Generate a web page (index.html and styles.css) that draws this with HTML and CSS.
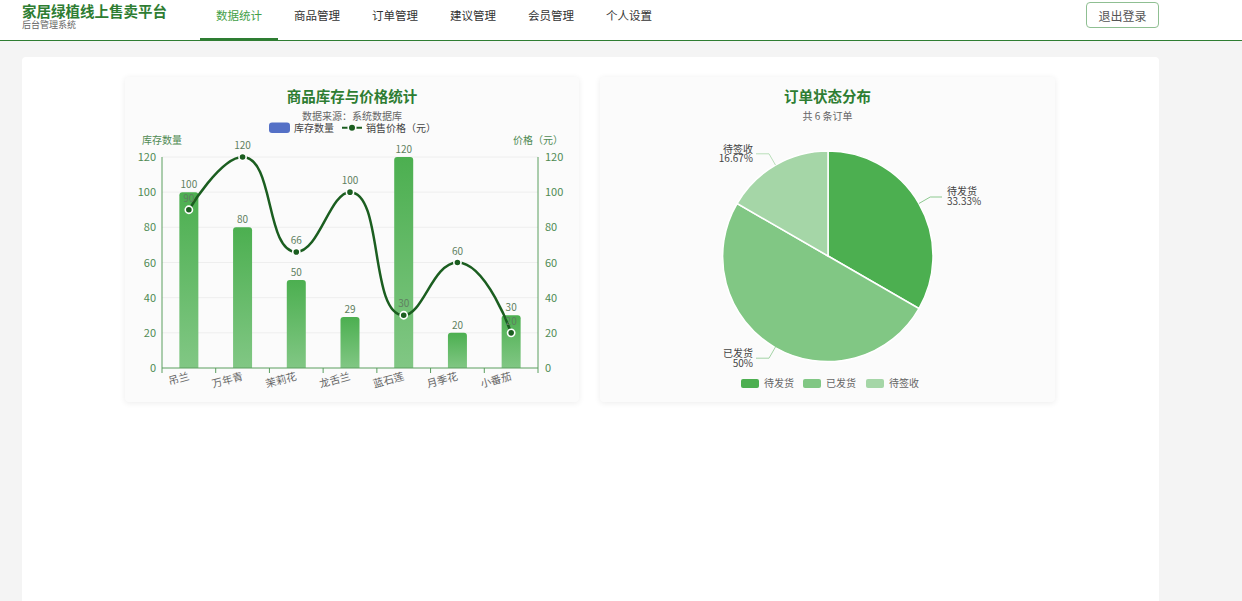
FILE: index.html
```html
<!DOCTYPE html>
<html lang="zh-CN">
<head>
<meta charset="utf-8">
<title>家居绿植线上售卖平台 - 数据统计</title>
<link rel="stylesheet" href="styles.css">
</head>
<body>
<header class="topbar">
  <div class="brand">
    <div class="brand-title">家居绿植线上售卖平台</div>
    <div class="brand-sub">后台管理系统</div>
  </div>
  <nav class="nav">
    <a class="nav-item active">数据统计</a>
    <a class="nav-item">商品管理</a>
    <a class="nav-item">订单管理</a>
    <a class="nav-item">建议管理</a>
    <a class="nav-item">会员管理</a>
    <a class="nav-item">个人设置</a>
  </nav>
  <button class="logout">退出登录</button>
</header>

<main class="main">
  <section class="card card-left">
    <div class="card-title">商品库存与价格统计</div>
    <div class="card-sub">数据来源：系统数据库</div>
    <svg class="chart" width="454" height="281" viewBox="0 0 454 281">
      <defs>
        <linearGradient id="barGrad" x1="0" y1="0" x2="0" y2="1">
          <stop offset="0" stop-color="#4caf50"/>
          <stop offset="1" stop-color="#81c784"/>
        </linearGradient>
      </defs>
      <!-- legend -->
      <rect x="144" y="1.5" width="21" height="10.5" rx="3" fill="#5470c6"/>
      <text class="legend-text" x="169" y="10.5">库存数量</text>
      <line x1="217" y1="6.75" x2="237" y2="6.75" stroke="#1b5e20" stroke-width="2"/>
      <circle cx="227" cy="6.75" r="3.8" fill="#1b5e20" stroke="#fbfbfb" stroke-width="1.6"/>
      <text class="legend-text" x="241" y="10.5">销售价格（元）</text>

      <!-- axis names -->
      <text class="axis-name" x="17" y="22.5">库存数量</text>
      <text class="axis-name" x="388" y="22.5">价格（元）</text>

      <!-- grid lines -->
      <g class="grid">
        <line x1="37" y1="36" x2="413" y2="36"/>
        <line x1="37" y1="71.17" x2="413" y2="71.17"/>
        <line x1="37" y1="106.33" x2="413" y2="106.33"/>
        <line x1="37" y1="141.5" x2="413" y2="141.5"/>
        <line x1="37" y1="176.67" x2="413" y2="176.67"/>
        <line x1="37" y1="211.83" x2="413" y2="211.83"/>
      </g>

      <!-- left axis labels -->
      <g class="ylabel-left">
        <text x="31" y="40">120</text>
        <text x="31" y="75.2">100</text>
        <text x="31" y="110.3">80</text>
        <text x="31" y="145.5">60</text>
        <text x="31" y="180.7">40</text>
        <text x="31" y="215.8">20</text>
        <text x="31" y="251">0</text>
      </g>
      <!-- right axis labels -->
      <g class="ylabel-right">
        <text x="420" y="40">120</text>
        <text x="420" y="75.2">100</text>
        <text x="420" y="110.3">80</text>
        <text x="420" y="145.5">60</text>
        <text x="420" y="180.7">40</text>
        <text x="420" y="215.8">20</text>
        <text x="420" y="251">0</text>
      </g>

      <!-- bars -->
      <g fill="url(#barGrad)">
        <path d="M54.36,247 V74.17 Q54.36,71.17 57.36,71.17 H70.36 Q73.36,71.17 73.36,74.17 V247 Z"/>
        <path d="M108.07,247 V109.33 Q108.07,106.33 111.07,106.33 H124.07 Q127.07,106.33 127.07,109.33 V247 Z"/>
        <path d="M161.79,247 V162.08 Q161.79,159.08 164.79,159.08 H177.79 Q180.79,159.08 180.79,162.08 V247 Z"/>
        <path d="M215.5,247 V199.01 Q215.5,196.01 218.5,196.01 H231.5 Q234.5,196.01 234.5,199.01 V247 Z"/>
        <path d="M269.21,247 V39 Q269.21,36 272.21,36 H285.21 Q288.21,36 288.21,39 V247 Z"/>
        <path d="M322.93,247 V214.83 Q322.93,211.83 325.93,211.83 H338.93 Q341.93,211.83 341.93,214.83 V247 Z"/>
        <path d="M376.64,247 V197.25 Q376.64,194.25 379.64,194.25 H392.64 Q395.64,194.25 395.64,197.25 V247 Z"/>
      </g>

      <!-- bar labels -->
      <g class="val-label">
        <text x="63.86" y="67">100</text>
        <text x="117.57" y="102">80</text>
        <text x="171.29" y="155">50</text>
        <text x="225" y="192">29</text>
        <text x="278.71" y="32">120</text>
        <text x="332.43" y="207.5">20</text>
        <text x="386.14" y="190">30</text>
      </g>

      <!-- axes -->
      <g class="axis">
        <line x1="37" y1="36" x2="37" y2="247"/>
        <line x1="413" y1="36" x2="413" y2="247"/>
        <line x1="37" y1="247" x2="413" y2="247"/>
        <line x1="37" y1="247" x2="37" y2="252"/>
        <line x1="90.71" y1="247" x2="90.71" y2="252"/>
        <line x1="144.43" y1="247" x2="144.43" y2="252"/>
        <line x1="198.14" y1="247" x2="198.14" y2="252"/>
        <line x1="251.86" y1="247" x2="251.86" y2="252"/>
        <line x1="305.57" y1="247" x2="305.57" y2="252"/>
        <line x1="359.29" y1="247" x2="359.29" y2="252"/>
        <line x1="413" y1="247" x2="413" y2="252"/>
      </g>

      <!-- price line -->
      <path class="price-line" d="M63.86,88.75 C63.86,88.75 95.64,36 117.57,36 C149.35,36 140.36,130.95 171.29,130.95 C194.07,130.95 204.89,71.17 225,71.17 C258.6,71.17 244.29,194.25 278.71,194.25 C298,194.25 307.74,141.5 332.43,141.5 C361.45,141.5 386.14,211.83 386.14,211.83"/>
      <g class="price-dot">
        <circle cx="63.86" cy="88.75" r="3.6"/>
        <circle cx="117.57" cy="36" r="3.6"/>
        <circle cx="171.29" cy="130.95" r="3.6"/>
        <circle cx="225" cy="71.17" r="3.6"/>
        <circle cx="278.71" cy="194.25" r="3.6"/>
        <circle cx="332.43" cy="141.5" r="3.6"/>
        <circle cx="386.14" cy="211.83" r="3.6"/>
      </g>
      <g class="val-label">
        <text x="63.86" y="81">90</text>
        <text x="117.57" y="28">120</text>
        <text x="171.29" y="123">66</text>
        <text x="225" y="63">100</text>
        <text x="278.71" y="186">30</text>
        <text x="332.43" y="133.5">60</text>
        <text x="386.14" y="204">20</text>
      </g>

      <!-- x labels -->
      <g class="xlabel">
        <text transform="translate(63.86,255) rotate(-15)" dy="0.35em">吊兰</text>
        <text transform="translate(117.57,255) rotate(-15)" dy="0.35em">万年青</text>
        <text transform="translate(171.29,255) rotate(-15)" dy="0.35em">茉莉花</text>
        <text transform="translate(225,255) rotate(-15)" dy="0.35em">龙舌兰</text>
        <text transform="translate(278.71,255) rotate(-15)" dy="0.35em">蓝石莲</text>
        <text transform="translate(332.43,255) rotate(-15)" dy="0.35em">月季花</text>
        <text transform="translate(386.14,255) rotate(-15)" dy="0.35em">小番茄</text>
      </g>
    </svg>
  </section>

  <section class="card card-right">
    <div class="card-title">订单状态分布</div>
    <div class="card-sub">共 6 条订单</div>
    <svg class="chart" width="455" height="281" viewBox="0 0 455 281">
      <g class="pie">
        <path d="M228,135 L228,30 A105,105 0 0 1 318.93,187.5 Z" fill="#4caf50"/>
        <path d="M228,135 L318.93,187.5 A105,105 0 1 1 137.07,82.5 Z" fill="#81c784"/>
        <path d="M228,135 L137.07,82.5 A105,105 0 0 1 228,30 Z" fill="#a5d6a7"/>
      </g>
      <!-- label lines -->
      <polyline class="label-line" points="318.93,82.5 330.2,76 342,76" stroke="#8cc98f"/>
      <polyline class="label-line" points="175.5,44.07 169,32.8 156,32.8" stroke="#b9dfba"/>
      <polyline class="label-line" points="175.5,225.93 169,237.2 156,237.2" stroke="#a3d3a5"/>
      <!-- labels -->
      <text class="pie-label" x="347" y="74">待发货<tspan x="347" dy="9.5">33.33%</tspan></text>
      <text class="pie-label end" x="153" y="31.5">待签收<tspan x="153" dy="9.5">16.67%</tspan></text>
      <text class="pie-label end" x="153" y="236">已发货<tspan x="153" dy="9.5">50%</tspan></text>
      <!-- legend -->
      <rect x="141" y="258" width="18" height="9" rx="2" fill="#4caf50"/>
      <text class="pie-legend" x="164" y="266">待发货</text>
      <rect x="203" y="258" width="18" height="9" rx="2" fill="#81c784"/>
      <text class="pie-legend" x="226" y="266">已发货</text>
      <rect x="266" y="258" width="18" height="9" rx="2" fill="#a5d6a7"/>
      <text class="pie-legend" x="289" y="266">待签收</text>
    </svg>
  </section>
</main>
</body>
</html>
```
FILE: styles.css
```css
* {
  box-sizing: border-box;
}

html, body {
  margin: 0;
  padding: 0;
}

body {
  background: #f4f4f4;
  font-family: "Noto Sans CJK SC", "Microsoft YaHei", sans-serif;
  color: #333;
  overflow: hidden;
}

.topbar {
  display: flex;
  align-items: flex-start;
  height: 41px;
  background: #fff;
  border-bottom: 1px solid #2e7d32;
  padding: 0 83px 0 22px;
}

.brand {
  width: 178px;
  padding-top: 2px;
}

.brand-title {
  font-size: 14.5px;
  font-weight: 700;
  line-height: 17px;
  color: #2e7d32;
  white-space: nowrap;
}

.brand-sub {
  font-size: 9px;
  line-height: 10px;
  margin-top: 1px;
  color: #666;
  white-space: nowrap;
}

.nav {
  display: flex;
  flex: 1;
}

.nav-item {
  width: 78px;
  height: 40px;
  line-height: 30px;
  text-align: center;
  font-size: 11.5px;
  color: #333;
  cursor: pointer;
}

.nav-item.active {
  color: #43a047;
  border-bottom: 2px solid #2e7d32;
}

.logout {
  margin-top: 2px;
  width: 73px;
  height: 26px;
  padding: 0;
  border: 1px solid #8fbf92;
  border-radius: 4px;
  background: #fff;
  font-family: inherit;
  font-size: 12px;
  color: #555;
}

.main {
  display: flex;
  align-items: flex-start;
  gap: 21px;
  margin: 16px 0 0 22px;
  width: 1137px;
  min-height: 560px;
  background: #fff;
  border-radius: 4px 4px 0 0;
  padding: 20px 0 0 103px;
}

.card {
  height: 325px;
  background: #fbfbfb;
  border-radius: 4px;
  box-shadow: 0 1px 6px rgba(0, 0, 0, 0.08);
  padding-top: 9px;
  text-align: center;
}

.card-left {
  width: 454px;
}

.card-right {
  width: 455px;
}

.card-title {
  font-size: 14.5px;
  font-weight: 700;
  line-height: 20px;
  color: #2e7d32;
}

.card-sub {
  font-size: 10px;
  line-height: 11px;
  margin-top: 4px;
  color: #666;
}

.chart {
  display: block;
  font-family: "Noto Sans CJK SC", "Microsoft YaHei", sans-serif;
}

.legend-text {
  font-size: 10px;
  fill: #444;
}

.axis-name {
  font-size: 10px;
  fill: #4f8a53;
}

.grid line {
  stroke: #eeeeee;
  stroke-width: 1;
}

.ylabel-left text,
.ylabel-right text {
  font-size: 11px;
  fill: #4f8a53;
}

.ylabel-left text {
  text-anchor: end;
}

.axis line {
  stroke: #5a9e5e;
  stroke-width: 1;
}

.val-label text {
  font-size: 10px;
  fill: #5f7f61;
  text-anchor: middle;
}

.price-line {
  fill: none;
  stroke: #1b5e20;
  stroke-width: 2.5;
}

.price-dot circle {
  fill: #1b5e20;
  stroke: #ffffff;
  stroke-width: 1.6;
}

.xlabel text {
  font-size: 10.5px;
  fill: #666;
  text-anchor: end;
}

.pie path {
  stroke: #ffffff;
  stroke-width: 1.5;
}

.label-line {
  fill: none;
  stroke-width: 1;
}

.pie-label {
  font-size: 10px;
  fill: #444;
}

.pie-label.end {
  text-anchor: end;
}

.pie-legend {
  font-size: 10px;
  fill: #666;
}
```
